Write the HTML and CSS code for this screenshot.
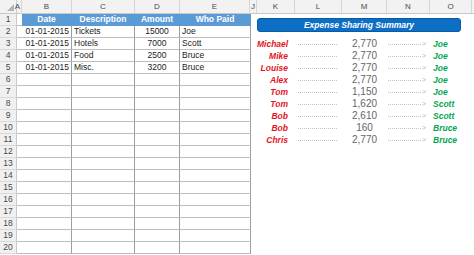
FILE: index.html
```html
<!DOCTYPE html>
<html lang="en">
<head>
    <meta charset="UTF-8">
    <title>Expense Sharing</title>
    <link rel="stylesheet" href="styles.css">
</head>
<body>
    <div class="sheet">
        <div class="col-heads">
            <div class="corner"><span class="tri"></span></div>
            <div class="ch c-a">A</div>
            <div class="ch c-b">B</div>
            <div class="ch c-c">C</div>
            <div class="ch c-d">D</div>
            <div class="ch c-e">E</div>
            <div class="ch c-j">J</div>
            <div class="ch c-k">K</div>
            <div class="ch c-l">L</div>
            <div class="ch c-m">M</div>
            <div class="ch c-n">N</div>
            <div class="ch c-o">O</div>
            <div class="ch c-p"></div>
        </div>
        <div class="body">
            <div class="grid" id="grid">
                <div class="row">
                    <div class="rn">1</div><div class="cell c-a"></div>
                    <div class="cell c-b th">Date</div>
                    <div class="cell c-c th">Description</div>
                    <div class="cell c-d th">Amount</div>
                    <div class="cell c-e th">Who Paid</div>
                </div>
                <div class="row">
                    <div class="rn">2</div><div class="cell c-a"></div>
                    <div class="cell c-b num">01-01-2015</div>
                    <div class="cell c-c">Tickets</div>
                    <div class="cell c-d mid">15000</div>
                    <div class="cell c-e">Joe</div>
                </div>
                <div class="row">
                    <div class="rn">3</div><div class="cell c-a"></div>
                    <div class="cell c-b num">01-01-2015</div>
                    <div class="cell c-c">Hotels</div>
                    <div class="cell c-d mid">7000</div>
                    <div class="cell c-e">Scott</div>
                </div>
                <div class="row">
                    <div class="rn">4</div><div class="cell c-a"></div>
                    <div class="cell c-b num">01-01-2015</div>
                    <div class="cell c-c">Food</div>
                    <div class="cell c-d mid">2500</div>
                    <div class="cell c-e">Bruce</div>
                </div>
                <div class="row">
                    <div class="rn">5</div><div class="cell c-a"></div>
                    <div class="cell c-b num">01-01-2015</div>
                    <div class="cell c-c">Misc.</div>
                    <div class="cell c-d mid">3200</div>
                    <div class="cell c-e">Bruce</div>
                </div>
            </div>
            <div class="summary">
                <div class="banner">Expense Sharing Summary</div>
                <div class="settle">
                    <div class="from">Michael</div><div class="dots"></div><div class="amt">2,770</div><div class="arrow"><span></span>&gt;</div><div class="to">Joe</div>
                </div>
                <div class="settle">
                    <div class="from">Mike</div><div class="dots"></div><div class="amt">2,770</div><div class="arrow"><span></span>&gt;</div><div class="to">Joe</div>
                </div>
                <div class="settle">
                    <div class="from">Louise</div><div class="dots"></div><div class="amt">2,770</div><div class="arrow"><span></span>&gt;</div><div class="to">Joe</div>
                </div>
                <div class="settle">
                    <div class="from">Alex</div><div class="dots"></div><div class="amt">2,770</div><div class="arrow"><span></span>&gt;</div><div class="to">Joe</div>
                </div>
                <div class="settle">
                    <div class="from">Tom</div><div class="dots"></div><div class="amt">1,150</div><div class="arrow"><span></span>&gt;</div><div class="to">Joe</div>
                </div>
                <div class="settle">
                    <div class="from">Tom</div><div class="dots"></div><div class="amt">1,620</div><div class="arrow"><span></span>&gt;</div><div class="to">Scott</div>
                </div>
                <div class="settle">
                    <div class="from">Bob</div><div class="dots"></div><div class="amt">2,610</div><div class="arrow"><span></span>&gt;</div><div class="to">Scott</div>
                </div>
                <div class="settle">
                    <div class="from">Bob</div><div class="dots"></div><div class="amt">160</div><div class="arrow"><span></span>&gt;</div><div class="to">Bruce</div>
                </div>
                <div class="settle">
                    <div class="from">Chris</div><div class="dots"></div><div class="amt">2,770</div><div class="arrow"><span></span>&gt;</div><div class="to">Bruce</div>
                </div>
            </div>
        </div>
    </div>
    <script>
        // empty rows 6..20 of the sheet
        let grid = document.getElementById('grid');
        for (let i = 6; i <= 20; i++) {
            let row = document.createElement('div');
            row.className = 'row';
            row.innerHTML = '<div class="rn">' + i + '</div><div class="cell c-a"></div>' +
                '<div class="cell c-b"></div><div class="cell c-c"></div>' +
                '<div class="cell c-d"></div><div class="cell c-e"></div>';
            grid.appendChild(row);
        }
    </script>
</body>
</html>
```

FILE: styles.css
```css
/* Sheet */
body {
    margin: 0;
    padding: 0;
    background-color: #ffffff;
    font-family: "Liberation Sans Narrow", "Liberation Sans", Arial, sans-serif;
    font-size: 8.5px;
    color: #222;
}

.sheet {
    width: 474px;
    height: 255px;
    overflow: hidden;
}

/* column widths */
.c-a { width: 5px; }
.c-b { width: 50px; }
.c-c { width: 63px; }
.c-d { width: 45px; }
.c-e { width: 70px; }
.c-j { width: 7px; }
.c-k { width: 38px; }
.c-l { width: 47px; }
.c-m { width: 45px; }
.c-n { width: 43px; }
.c-o { width: 42px; }
.c-p { flex: 1; }

.col-heads {
    display: flex;
    height: 14px;
    background-color: #f2f2f2;
    border-bottom: 1px solid #c8c8c8;
    box-sizing: border-box;
}

.corner {
    width: 17px;
    flex-shrink: 0;
    display: flex;
    justify-content: flex-end;
    align-items: flex-end;
    padding: 0 2px 2px 0;
    box-sizing: border-box;
    border-right: 1px solid #d0d0d0;
}

.tri {
    width: 0;
    height: 0;
    border-left: 7px solid transparent;
    border-bottom: 7px solid #b4b4b4;
}

.ch {
    flex-shrink: 0;
    box-sizing: border-box;
    border-right: 1px solid #d6d6d6;
    text-align: center;
    line-height: 13px;
    color: #4a4a4a;
    font-family: "Liberation Sans", Arial, sans-serif;
    font-size: 8px;
}

.ch.c-a {
    overflow: visible;
    text-indent: -3px;
}

.ch.c-j {
    text-align: left;
    padding-left: 1px;
    overflow: visible;
}

.ch.c-p {
    border-right: none;
}

.body {
    display: flex;
}

/* left grid */
.grid {
    width: 251px;
    flex-shrink: 0;
}

.row {
    display: flex;
    height: 12px;
}

.rn {
    width: 17px;
    flex-shrink: 0;
    box-sizing: border-box;
    background-color: #f0f0f0;
    border-right: 1px solid #c8c8c8;
    border-bottom: 1px solid #dadada;
    text-align: center;
    line-height: 11px;
    color: #4a4a4a;
    font-size: 8.5px;
}

.cell {
    flex-shrink: 0;
    box-sizing: border-box;
    border-bottom: 1px solid #bdbdbd;
    border-right: 1px solid #9e9e9e;
    line-height: 11px;
    padding: 0 2px;
    white-space: nowrap;
    overflow: hidden;
}

.cell.c-a {
    border-right: none;
    padding: 0;
}

.cell.c-e {
    width: 71px;
}

.cell.th {
    background-color: #5b9bd5;
    color: #ffffff;
    font-weight: bold;
    text-align: center;
    border-right-color: #5b9bd5;
    border-bottom-color: #5b9bd5;
}

.cell.num {
    text-align: right;
}

.cell.mid {
    text-align: center;
}

/* summary panel */
.summary {
    flex: 1;
    padding: 4px 0 0 6px;
}

.banner {
    width: 204px;
    height: 14px;
    box-sizing: border-box;
    background-color: #0d6ec6;
    border: 1px solid #0a5aa6;
    border-radius: 3px;
    color: #ffffff;
    font-weight: bold;
    font-style: italic;
    text-align: center;
    line-height: 12px;
    margin-bottom: 6px;
}

.settle {
    display: grid;
    grid-template-columns: 38px 47px 45px 43px 42px;
    height: 12px;
    align-items: center;
    line-height: 12px;
}

.from {
    text-align: right;
    padding-right: 7px;
    color: #e5131e;
    font-weight: bold;
    font-style: italic;
}

.dots {
    margin: 0 5px 0 3px;
    border-top: 1px dotted #c4c4c4;
    height: 0;
}

.amt {
    text-align: center;
    color: #666666;
    font-size: 10px;
}

.arrow {
    display: flex;
    align-items: center;
    padding-left: 1px;
    color: #b0b0b0;
    font-size: 7px;
}

.arrow span {
    width: 33px;
    border-top: 1px dotted #c4c4c4;
    margin-right: 1px;
}

.to {
    padding-left: 3px;
    color: #00a651;
    font-weight: bold;
    font-style: italic;
}
```
